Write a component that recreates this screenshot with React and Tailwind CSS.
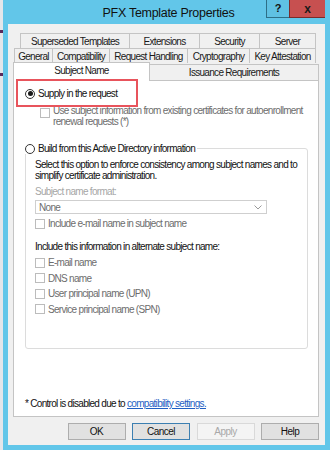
import React from "react";

const F = { fontFamily: '"Liberation Sans", Arial, sans-serif' };

function Radio({ checked }) {
  return (
    <span className="relative w-[10px] h-[10px] rounded-full border border-[#333333] bg-white flex items-center justify-center shrink-0">
      {checked && <span className="w-[5px] h-[5px] rounded-full bg-[#1a1a1a]" />}
    </span>
  );
}

function Box() {
  return <span className="block w-[10px] h-[10px] border border-[#bcbcbc] bg-white shrink-0" />;
}

function Tab({ w, children, cls = "" }) {
  return (
    <div
      className={`-ml-px first:ml-0 flex items-center justify-center border border-b-0 border-[#c4c4c4] bg-[#f0f0f0] text-[10px] tracking-[-0.7px] text-[#1a1a1a] ${cls}`}
      style={{ width: w }}
    >
      {children}
    </div>
  );
}

function Btn({ children, cls = "" }) {
  return (
    <div className={`w-[58px] h-[17px] flex items-center justify-center text-[10px] tracking-[-0.5px] border ${cls}`}>
      {children}
    </div>
  );
}

export default function App() {
  return (
    <div className="w-[330px] h-[450px] flex overflow-hidden" style={F}>
      <div className="w-[3px] h-full bg-[#e4e6ea] flex flex-col">
        <div className="h-[30px]" />
        <div className="h-[3px] bg-[#5a2a5a]" />
        <div className="h-[40px]" />
        <div className="h-[3px] bg-[#5a2a5a]" />
      </div>
      <div className="flex-1 bg-[#62c6e9] flex flex-col">
        {/* title bar */}
        <div className="relative h-[24px] shrink-0 flex items-center justify-center">
          <span className="text-[12.5px] tracking-[-0.3px] text-[#111111] pl-[4px] pt-[3px]">PFX Template Properties</span>
          <div className="absolute top-0 right-[5px] flex">
            <div className="w-[23px] h-[18px] bg-[#5fc1e3] border-l border-b border-[#2d6f87] flex items-center justify-center text-[11px] font-bold text-[#111]">?</div>
            <div className="w-[36px] h-[18px] bg-[#c75050] border-l border-b border-[#7a2b2b] flex items-center justify-center text-[12px] font-bold text-[#1b1b1b]">x</div>
          </div>
        </div>
        {/* client area */}
        <div className="ml-[5px] mr-[5px] h-[421px] bg-[#f0f0f0] flex flex-col">
          {/* tabs */}
          <div className="pt-[9px] flex flex-col">
            <div className="flex ml-[12px] h-[15px]">
              <Tab w={110}>Superseded Templates</Tab>
              <Tab w={71}>Extensions</Tab>
              <Tab w={61}>Security</Tab>
              <Tab w={57}>Server</Tab>
            </div>
            <div className="flex ml-[6px] h-[15px]">
              <Tab w={39}>General</Tab>
              <Tab w={58}>Compatibility</Tab>
              <Tab w={79}>Request Handling</Tab>
              <Tab w={63}>Cryptography</Tab>
              <Tab w={67}>Key Attestation</Tab>
            </div>
            <div className="flex items-end ml-[5px] h-[17px]">
              <div className="relative z-10 w-[137px] h-[19px] -mb-px bg-white border border-b-0 border-[#c4c4c4] flex items-center justify-center text-[10px] tracking-[-0.7px] text-[#1a1a1a] pb-[3px]">
                Subject Name
              </div>
              <div className="-ml-px w-[170px] h-[16px] bg-[#f0f0f0] border border-b-0 border-[#c4c4c4] flex items-center justify-center text-[10px] tracking-[-0.7px] text-[#1a1a1a]">
                Issuance Requirements
              </div>
            </div>
          </div>
          {/* panel */}
          <div className="relative ml-[5px] w-[306px] h-[337px] bg-white border border-[#c4c4c4] flex flex-col pl-[11px] text-[10px] tracking-[-0.7px] leading-[11px]">
            {/* red highlight annotation */}
            <div className="absolute left-[2px] -top-[2px] w-[122px] h-[28px] border-2 border-[#e8545c] z-20" />
            <div className="mt-[7px] flex items-center h-[11px]">
              <Radio checked />
              <span className="ml-[3px] text-[#111]">Supply in the request</span>
            </div>
            <div className="mt-[6px] ml-[15px] flex items-start">
              <div className="mt-[3px]"><Box /></div>
              <div className="ml-[3px] text-[#6d6d6d]">
                <div>Use subject information from existing certificates for autoenrollment</div>
                <div>renewal requests (*)</div>
              </div>
            </div>
            {/* group box */}
            <div className="relative mt-[21px] w-[283px] h-[201px] border border-[#dcdcdc] rounded-[3px] flex flex-col pl-[9px]">
              <div className="absolute -top-[6px] -left-px flex items-center h-[11px] bg-white pr-[2px]">
                <Radio />
                <span className="ml-[3px] text-[#111]">Build from this Active Directory information</span>
              </div>
              <div className="mt-[10px] text-[#111]">
                <div>Select this option to enforce consistency among subject names and to</div>
                <div>simplify certificate administration.</div>
              </div>
              <div className="mt-[5px] text-[#a6a6a6]">Subject name format:</div>
              <div className="mt-[3px] w-[232px] h-[14px] border border-[#cfcfcf] flex items-center justify-between px-[3px] text-[#6d6d6d]">
                <span>None</span>
                <svg width="8" height="5" viewBox="0 0 8 5" className="mr-[1px]">
                  <path d="M0.5 0.5 L4 4 L7.5 0.5" fill="none" stroke="#9a9a9a" strokeWidth="1" />
                </svg>
              </div>
              <div className="mt-[4px] flex items-center h-[11px]">
                <Box />
                <span className="ml-[3px] text-[#6d6d6d]">Include e-mail name in subject name</span>
              </div>
              <div className="mt-[12px] text-[#111]">Include this information in alternate subject name:</div>
              <div className="mt-[3px] flex flex-col">
                {["E-mail name", "DNS name", "User principal name (UPN)", "Service principal name (SPN)"].map((t) => (
                  <div key={t} className="h-[15.5px] flex items-center">
                    <Box />
                    <span className="ml-[3px] text-[#6d6d6d]">{t}</span>
                  </div>
                ))}
              </div>
            </div>
            <div className="mt-[49px] text-[#111]">
              * Control is disabled due to{" "}
              <span className="text-[#1f5fc4] underline">compatibility settings.</span>
            </div>
          </div>
          {/* buttons */}
          <div className="mt-[6px] flex justify-end gap-[6.5px] pr-[6px]">
            <Btn cls="bg-[#e1e1e1] border-[#adadad] text-[#111]">OK</Btn>
            <Btn cls="bg-[#e1e1e1] border-[#3c7fb1] text-[#111]">Cancel</Btn>
            <Btn cls="bg-[#f4f4f4] border-[#d9d9d9] text-[#a8a8a8]">Apply</Btn>
            <Btn cls="bg-[#e1e1e1] border-[#adadad] text-[#111]">Help</Btn>
          </div>
        </div>
      </div>
    </div>
  );
}
